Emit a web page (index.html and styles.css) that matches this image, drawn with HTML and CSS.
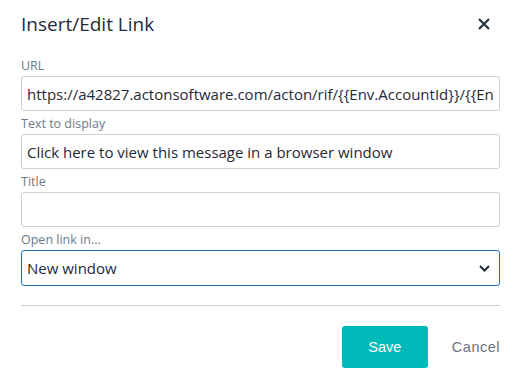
FILE: index.html
```html
<!DOCTYPE html>
<html>
<head>
<meta charset="utf-8">
<link rel="stylesheet" href="styles.css">
</head>
<body>
<div class="dialog">
  <div class="header">
    <h1 class="title">Insert/Edit Link</h1>
    <button class="close" aria-label="Close">
      <svg width="12" height="12" viewBox="0 0 12 12"><path d="M1 1 L11 11 M11 1 L1 11" stroke="#253345" stroke-width="2.2"/></svg>
    </button>
  </div>
  <div class="form">
    <div class="field">
      <label class="label">URL</label>
      <input class="input" type="text" value="https://a42827.actonsoftware.com/acton/rif/{{Env.AccountId}}/{{Env.MessageId}}/-/{{Env.RecipientId}}">
    </div>
    <div class="field">
      <label class="label">Text to display</label>
      <input class="input" type="text" value="Click here to view this message in a browser window">
    </div>
    <div class="field">
      <label class="label">Title</label>
      <input class="input" type="text" value="">
    </div>
    <div class="field">
      <label class="label">Open link in...</label>
      <div class="select">
        <span>New window</span>
        <svg width="11" height="7" viewBox="0 0 11 7"><path d="M1 1 L5.5 5.5 L10 1" fill="none" stroke="#1f2a38" stroke-width="2"/></svg>
      </div>
    </div>
  </div>
  <hr class="divider">
  <div class="footer">
    <button class="save">Save</button>
    <button class="cancel">Cancel</button>
  </div>
</div>
</body>
</html>
```

FILE: styles.css
```css
* { box-sizing: border-box; }
html, body { margin: 0; padding: 0; background: #fff; }
body { font-family: "Open Sans", "Noto Sans", sans-serif; color: #1f2a38; }
.dialog { width: 520px; height: 380px; padding: 0 20px 0 21px; }
.header { display: flex; justify-content: space-between; align-items: center; height: 48px; }
.title { margin: 0; font-size: 19px; font-weight: 400; color: #1f2a3a; }
.close { border: 0; background: none; padding: 0; margin-right: 10px; display: flex; }
.form { display: flex; flex-direction: column; padding-top: 5px; }
.field { display: flex; flex-direction: column; }
.label { font-size: 12.5px; color: #6c7a8a; height: 23px; display: flex; align-items: flex-end; padding-bottom: 2px; line-height: 17px; }
.input { height: 35px; border: 1px solid #cfcfcf; border-radius: 3px; padding: 0 5px; font-family: inherit; font-size: 15px; color: #1f2a38; outline: none; width: 100%; }
.select { height: 36px; border: 1px solid #1f6fb0; border-radius: 3px; padding: 0 9px 0 5px; font-size: 15px; display: flex; align-items: center; justify-content: space-between; color: #1f2a38; }
.divider { border: 0; border-top: 1px solid #d0d0d0; margin: 19px 0 0 0; }
.footer { display: flex; justify-content: flex-end; align-items: center; gap: 24px; padding-top: 20px; }
.save { width: 86px; height: 42px; border: 0; border-radius: 3px; background: #00b9b9; color: #fff; font-family: "Liberation Sans", Arial, sans-serif; font-size: 14.5px; }
.cancel { border: 0; background: none; padding: 0; color: #6b7280; font-family: "Liberation Sans", Arial, sans-serif; font-size: 14.5px; letter-spacing: 0.5px; }
```
